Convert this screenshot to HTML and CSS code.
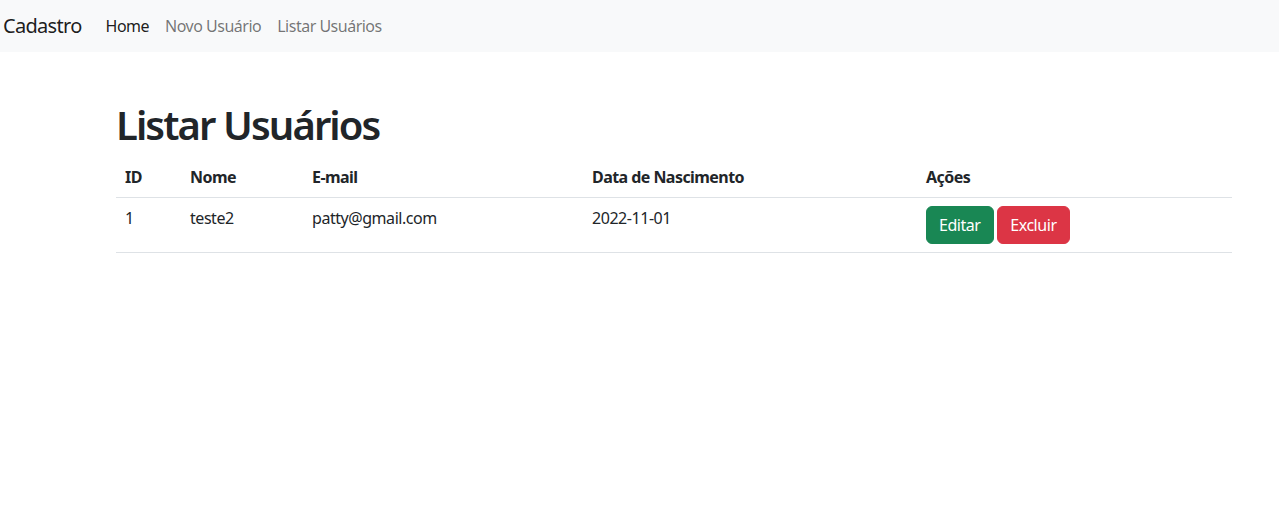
FILE: index.html
```html
<!DOCTYPE html>
<html lang="pt-BR">
<head>
  <meta charset="UTF-8">
  <meta name="viewport" content="width=device-width, initial-scale=1.0">
  <title>Cadastro</title>
  <link rel="stylesheet" href="styles.css">
</head>
<body>
  <nav class="navbar">
    <a class="navbar-brand" href="#">Cadastro</a>
    <ul class="nav-links">
      <li><a class="nav-link active" href="#">Home</a></li>
      <li><a class="nav-link" href="#">Novo Usuário</a></li>
      <li><a class="nav-link" href="#">Listar Usuários</a></li>
    </ul>
  </nav>

  <main class="container">
    <h1>Listar Usuários</h1>

    <table class="table">
      <colgroup>
        <col class="col-id">
        <col class="col-nome">
        <col class="col-email">
        <col class="col-data">
        <col>
      </colgroup>
      <thead>
        <tr>
          <th>ID</th>
          <th>Nome</th>
          <th>E-mail</th>
          <th>Data de Nascimento</th>
          <th>Ações</th>
        </tr>
      </thead>
      <tbody>
        <tr>
          <td>1</td>
          <td>teste2</td>
          <td>patty@gmail.com</td>
          <td>2022-11-01</td>
          <td>
            <a href="#" class="btn btn-success">Editar</a>
            <a href="#" class="btn btn-danger">Excluir</a>
          </td>
        </tr>
      </tbody>
    </table>
  </main>
</body>
</html>
```

FILE: styles.css
```css
:root {
  --body-color: #212529;
  --border-color: #dee2e6;
  --light-bg: #f8f9fa;
  --success: #198754;
  --danger: #dc3545;
}

* {
  box-sizing: border-box;
}

body {
  margin: 0;
  font-family: 'Noto Sans', 'Open Sans', sans-serif;
  font-size: 16px;
  line-height: 1.5;
  letter-spacing: -0.45px;
  color: var(--body-color);
  background-color: #fff;
}

a {
  text-decoration: none;
}

/* navbar */
.navbar {
  display: flex;
  align-items: center;
  height: 52px;
  padding: 0 3px;
  background-color: var(--light-bg);
}

.navbar-brand {
  font-size: 20px;
  line-height: 30px;
  letter-spacing: -0.7px;
  margin-right: 16px;
  color: rgba(0, 0, 0, 0.9);
}

.nav-links {
  display: flex;
  list-style: none;
  margin: 0;
  padding: 0;
}

.nav-link {
  display: block;
  padding: 8px;
  letter-spacing: -0.5px;
  color: rgba(0, 0, 0, 0.55);
}

.nav-link.active {
  color: rgba(0, 0, 0, 0.9);
}

/* content */
.container {
  padding: 49px 47px 0 116px;
}

h1 {
  margin: 0 0 8px;
  font-size: 40px;
  font-weight: 600;
  line-height: 1.2;
  letter-spacing: -1.9px;
}

.table {
  width: 100%;
  table-layout: fixed;
  border-collapse: collapse;
  color: var(--body-color);
}

.col-id { width: 65px; }
.col-nome { width: 122px; }
.col-email { width: 280px; }
.col-data { width: 334px; }

.table th,
.table td {
  padding: 8px 8px 8px 9px;
  text-align: left;
  vertical-align: top;
  border-bottom: 1px solid var(--border-color);
}

.table th {
  font-weight: 700;
  letter-spacing: -0.55px;
}

.btn {
  display: inline-block;
  padding: 6px 12px;
  font-size: 16px;
  line-height: 1.5;
  color: #fff;
  border: 1px solid transparent;
  border-radius: 6px;
}

.btn-success {
  background-color: var(--success);
  border-color: var(--success);
}

.btn-danger {
  background-color: var(--danger);
  border-color: var(--danger);
}
```
